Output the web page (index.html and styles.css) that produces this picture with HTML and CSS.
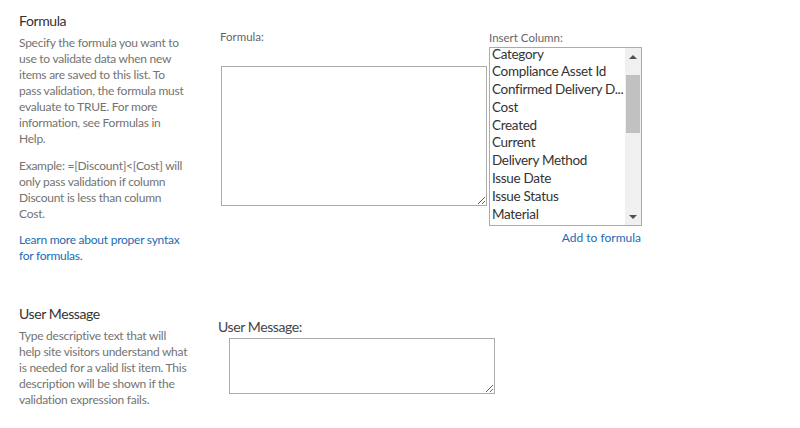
FILE: index.html
```html
<!DOCTYPE html>
<html lang="en">
<head>
<meta charset="utf-8">
<title>Validation Settings</title>
<link rel="stylesheet" href="styles.css">
</head>
<body>
<div class="page">
  <section class="section section-formula">
    <div class="side">
      <h3 class="side-title">Formula</h3>
      <p class="desc">Specify the formula you want to<br>use to validate data when new<br>items are saved to this list. To<br>pass validation, the formula must<br>evaluate to TRUE. For more<br>information, see Formulas in<br>Help.</p>
      <p class="desc desc-example">Example: =[Discount]&lt;[Cost] will<br>only pass validation if column<br>Discount is less than column<br>Cost.</p>
      <p class="desc desc-link"><a class="link" href="#">Learn more about proper syntax<br>for formulas.</a></p>
    </div>
    <div class="main main-formula">
      <div class="formula-col">
        <div class="small-label">Formula:</div>
        <textarea class="formula-box"></textarea>
      </div>
      <div class="column-col">
        <div class="small-label">Insert Column:</div>
        <div class="listbox">
          <div class="list-items">
            <div class="list-item">Category</div>
            <div class="list-item">Compliance Asset Id</div>
            <div class="list-item">Confirmed Delivery D...</div>
            <div class="list-item">Cost</div>
            <div class="list-item">Created</div>
            <div class="list-item">Current</div>
            <div class="list-item">Delivery Method</div>
            <div class="list-item">Issue Date</div>
            <div class="list-item">Issue Status</div>
            <div class="list-item">Material</div>
          </div>
          <div class="scrollbar">
            <div class="arrow arrow-up"></div>
            <div class="track"><div class="thumb"></div></div>
            <div class="arrow arrow-down"></div>
          </div>
        </div>
        <div class="add-row"><a class="link" href="#">Add to formula</a></div>
      </div>
    </div>
  </section>
  <section class="section section-message">
    <div class="side">
      <h3 class="side-title">User Message</h3>
      <p class="desc">Type descriptive text that will<br>help site visitors understand what<br>is needed for a valid list item. This<br>description will be shown if the<br>validation expression fails.</p>
    </div>
    <div class="main main-message">
      <div class="message-label">User Message:</div>
      <textarea class="message-box"></textarea>
    </div>
  </section>
</div>
</body>
</html>
```
FILE: styles.css
```css
html, body {
  margin: 0;
  padding: 0;
  background: #ffffff;
}
body {
  font-family: Lato, "Open Sans", sans-serif;
  color: #333333;
}
.page {
  padding-left: 19px;
}
.section {
  display: flex;
}
.section-formula {
  padding-top: 11px;
}
.section-message {
  padding-top: 40px;
}
.side {
  width: 195px;
  flex: none;
}
.side-title {
  margin: 0;
  font-size: 14px;
  font-weight: 400;
  letter-spacing: -0.4px;
  line-height: 20px;
  color: #333333;
}
.desc {
  margin: 4px 0 0 0;
  font-size: 12px;
  letter-spacing: -0.25px;
  line-height: 16px;
  color: #737373;
  white-space: nowrap;
}
.desc-example {
  margin-top: 11px;
}
.desc-link {
  margin-top: 10px;
}
.link {
  color: #1b6bb5;
  text-decoration: none;
}
.main {
  margin-left: 6px;
}
.main-formula {
  display: flex;
  padding-top: 18px;
}
.small-label {
  font-size: 11.5px;
  line-height: 16px;
  color: #666666;
}
.formula-col {
  width: 269px;
}
.formula-box {
  display: block;
  box-sizing: border-box;
  margin: 21px 0 0 1px;
  width: 266px;
  height: 140px;
  border: 1px solid #ababab;
  border-radius: 0;
  padding: 0;
  resize: both;
  background: #fff;
}
.column-col {
  width: 153px;
  margin-top: 1px;
}
.listbox {
  box-sizing: border-box;
  margin-top: 1px;
  width: 153px;
  height: 179px;
  border: 1px solid #ababab;
  display: flex;
  overflow: hidden;
}
.list-items {
  flex: 1;
  min-width: 0;
  margin-top: -2.5px;
  padding: 0 0 0 2px;
}
.list-item {
  font-size: 13.5px;
  letter-spacing: -0.3px;
  line-height: 17.8px;
  color: #333333;
  white-space: nowrap;
  overflow: hidden;
  text-overflow: ellipsis;
}
.scrollbar {
  width: 16px;
  flex: none;
  background: #f0f0f0;
  display: flex;
  flex-direction: column;
}
.arrow {
  height: 17px;
  display: flex;
  align-items: center;
  justify-content: center;
  flex: none;
}
.arrow::before {
  content: "";
  width: 0;
  height: 0;
  border-left: 4px solid transparent;
  border-right: 4px solid transparent;
}
.arrow-up::before {
  border-bottom: 4px solid #505050;
}
.arrow-down::before {
  border-top: 4px solid #505050;
}
.track {
  flex: 1;
  padding: 10px 1px 0 1px;
}
.thumb {
  height: 58px;
  background: #c1c1c1;
}
.add-row {
  text-align: right;
  font-size: 12px;
  line-height: 16px;
  margin-top: 4px;
  padding-right: 1px;
}
.main-message {
  margin-left: 4px;
  padding-top: 14px;
}
.message-label {
  font-size: 14px;
  letter-spacing: -0.4px;
  line-height: 18px;
  color: #444444;
}
.message-box {
  display: block;
  box-sizing: border-box;
  margin: 2px 0 0 11px;
  width: 266px;
  height: 56px;
  border: 1px solid #ababab;
  border-radius: 0;
  padding: 0;
  resize: both;
  background: #fff;
}
```
